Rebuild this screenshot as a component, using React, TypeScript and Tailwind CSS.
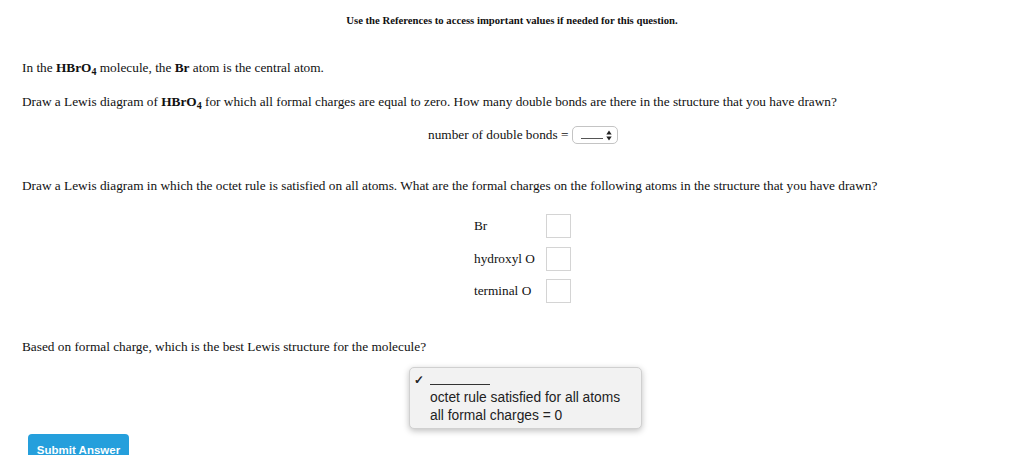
const serif = "font-['Liberation_Serif','Times_New_Roman',serif]";

function AnswerBox() {
  return <span className="inline-block h-[24px] w-[25px] border border-[#d4d4d4] bg-white" />;
}

function ChargeRow({ label }: { label: string }) {
  return (
    <div className="flex h-[32.5px] items-center">
      <span className="w-[72px]">{label}</span>
      <AnswerBox />
    </div>
  );
}

export default function App() {
  return (
    <div className={`${serif} h-[455px] w-[1024px] overflow-hidden bg-white text-[13.3px] leading-[16px] text-[#111]`}>
      <p className="pt-[14px] text-center text-[10.7px] font-bold leading-[13px]">
        Use the References to access important values if needed for this question.
      </p>

      <div className="pl-[22px]">
        <p className="mt-[33px]">
          In the <b>HBrO<sub className="text-[10px]">4</sub></b> molecule, the <b>Br</b> atom is the central atom.
        </p>
        <p className="mt-[18px]">
          Draw a Lewis diagram of <b>HBrO<sub className="text-[10px]">4</sub></b> for which all formal charges are equal to zero. How many double bonds are there in the structure that you have drawn?
        </p>
      </div>

      <div className="mt-[16px] flex h-[18px] items-center pl-[428px]">
        <span>number of double bonds =</span>
        <span className="ml-[4px] flex h-[18px] w-[46px] items-center justify-between rounded-[5px] border border-[#c4c4c4] bg-white pl-[8px] pr-[5px]">
          <span className="mt-[6px] h-px w-[22px] bg-[#555]" />
          <svg width="6" height="11" viewBox="0 0 6 11">
            <path d="M3 0.5 L5.7 4.5 H0.3 Z M3 10.5 L5.7 6.5 H0.3 Z" fill="#222" />
          </svg>
        </span>
      </div>

      <p className="mt-[34px] pl-[22px]">
        Draw a Lewis diagram in which the octet rule is satisfied on all atoms. What are the formal charges on the following atoms in the structure that you have drawn?
      </p>

      <div className="mt-[16px] pl-[474px]">
        <ChargeRow label="Br" />
        <ChargeRow label="hydroxyl O" />
        <ChargeRow label="terminal O" />
      </div>

      <p className="mt-[31.5px] pl-[22px]">Based on formal charge, which is the best Lewis structure for the molecule?</p>

      <div className="ml-[409px] mt-[12px] w-[233px] rounded-[5px] border border-[#d0d0d0] bg-[#f2f2f2] pb-[3px] pt-[3px] font-['Liberation_Sans',Arial,sans-serif] text-[13.8px] leading-[18px] text-[#222] shadow-[0_2px_6px_rgba(0,0,0,0.25)]">
        <div className="flex h-[18px] items-center">
          <span className="w-[20px] pl-[4px] text-[12px] font-bold">✓</span>
          <span className="mt-[9px] h-px w-[60px] bg-[#333]" />
        </div>
        <div className="pl-[20px]">octet rule satisfied for all atoms</div>
        <div className="pl-[20px]">all formal charges = 0</div>
      </div>

      <button className="ml-[28px] mt-[5px] h-[24px] w-[101px] rounded-[4px] bg-[#259fdc] pt-[8px] font-['Liberation_Sans',Arial,sans-serif] text-[11.5px] font-bold text-white">
        Submit Answer
      </button>
    </div>
  );
}
